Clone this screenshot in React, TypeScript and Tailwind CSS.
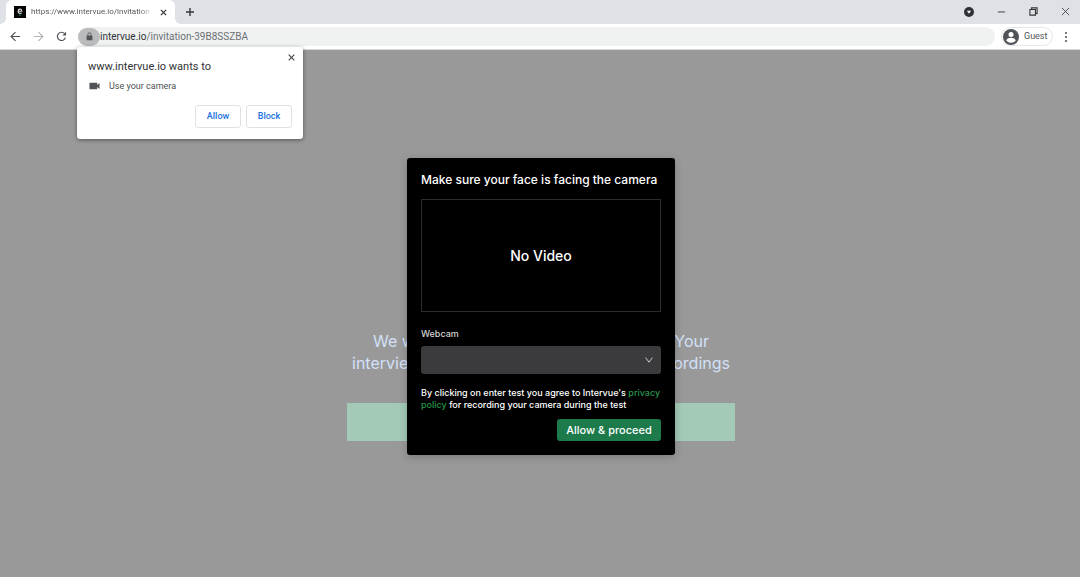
import React from "react";

function TabStrip() {
  return (
    <div className="flex h-6 items-stretch bg-[#dee1e6] pl-[6px]">
      <div className="relative flex w-[169px] items-center rounded-t-md bg-white px-2">
        <span className="absolute -left-[6px] bottom-0 size-[6px] bg-[radial-gradient(circle_at_0_0,#dee1e6_6px,white_6px)]" />
        <span className="absolute -right-[6px] bottom-0 size-[6px] bg-[radial-gradient(circle_at_100%_0,#dee1e6_6px,white_6px)]" />
        <svg viewBox="0 0 12 12" className="size-3 shrink-0" aria-hidden="true">
          <rect width="12" height="12" fill="#050505" />
          <path d="M4.200 5.300h3.600c0-1.500-.8-2.200-1.800-2.200s-1.800.8-1.800 2.200.9 2.100 2 2.100q.9 0 1.400-.5" fill="none" stroke="#dcdcdc" strokeWidth="1.100" />
          <path d="M4.800 9q1.200.6 2.400 0" fill="none" stroke="#1c8a50" strokeWidth="0.900" />
        </svg>
        <span className="ml-[5px] min-w-0 flex-1 overflow-hidden whitespace-nowrap text-[8px] leading-3 text-[#55585c] [mask-image:linear-gradient(to_right,black_88%,transparent)]">
          https://www.intervue.io/invitation
        </span>
        <button aria-label="Close tab" className="ml-[6px] shrink-0 text-[#303236]">
          <svg viewBox="0 0 8 8" className="size-[7px]" fill="none" stroke="currentColor" strokeWidth="1.400">
            <path d="M1 1l6 6M7 1L1 7" />
          </svg>
        </button>
      </div>
      <button aria-label="New tab" className="ml-[10px] text-[#35373a]">
        <svg viewBox="0 0 10 10" className="size-[10px]" fill="none" stroke="currentColor" strokeWidth="1.400">
          <path d="M5 1v8M1 5h8" />
        </svg>
      </button>
      <div className="ml-auto flex items-center gap-[23px] pb-[2px] pr-[10px] text-[#333]">
        <button aria-label="Search tabs" className="pt-[2px]">
          <svg viewBox="0 0 12 12" className="size-[10px]">
            <circle cx="6" cy="6" r="6" fill="#303134" />
            <path d="M3.500 4.500h5L6 8z" fill="#fff" />
          </svg>
        </button>
        <button aria-label="Minimize">
          <svg viewBox="0 0 10 10" className="size-[9px]" fill="none" stroke="currentColor">
            <path d="M1 5.500h8" />
          </svg>
        </button>
        <button aria-label="Restore">
          <svg viewBox="0 0 10 10" className="size-[9px]" fill="none" stroke="currentColor" strokeWidth="1.200">
            <path d="M1 2.800h6.200V9H1zM2.800 2.500V1H9v6.200H7.500" />
          </svg>
        </button>
        <button aria-label="Close window">
          <svg viewBox="0 0 10 10" className="size-[9px]" fill="none" stroke="currentColor" strokeWidth="0.900">
            <path d="M1 1l8 8M9 1L1 9" />
          </svg>
        </button>
      </div>
    </div>
  );
}

function Toolbar() {
  return (
    <div className="flex h-[26px] items-center border-b border-[#d8d8d8] bg-white pl-[10px] pr-3">
      <button aria-label="Back" className="text-[#4f5256]">
        <svg viewBox="0 0 12 12" className="size-[11px]" fill="none" stroke="currentColor" strokeWidth="1.300">
          <path d="M11 6H1.500M6 1.200L1.200 6 6 10.800" />
        </svg>
      </button>
      <button aria-label="Forward" className="ml-3 text-[#b4b6b9]">
        <svg viewBox="0 0 12 12" className="size-[11px]" fill="none" stroke="currentColor" strokeWidth="1.300">
          <path d="M1 6h9.500M6 1.200L10.800 6 6 10.800" />
        </svg>
      </button>
      <button aria-label="Reload" className="ml-3 text-[#4f5256]">
        <svg viewBox="0 0 12 12" className="size-[11px]" fill="none" stroke="currentColor" strokeWidth="1.300">
          <path d="M9.400 2.900A4.500 4.500 0 1 0 10.300 7.200" />
          <path d="M11 .8v4H7z" fill="currentColor" stroke="none" />
        </svg>
      </button>
      <div className="ml-[11px] flex h-[19px] flex-1 items-center rounded-full bg-[#f0f2f2]">
        <button aria-label="Site information" className="flex h-[18px] w-[22px] items-center justify-center rounded-full bg-[#b9bbbd]">
          <svg viewBox="0 0 8 10" className="h-[9px] w-[7px]">
            <rect x=".7" y="3.800" width="6.600" height="5.400" rx=".6" fill="#505357" />
            <path d="M2.200 4V2.500a1.800 1.800 0 0 1 3.600 0V4" fill="none" stroke="#505357" />
          </svg>
        </button>
        <span className="whitespace-nowrap text-[10px] leading-4 text-[#6c6f73]">
          <span className="text-[#2e3033]">intervue.io</span>/invitation-39B8SSZBA
        </span>
      </div>
      <button className="ml-[6px] flex h-[19px] w-[52px] items-center gap-[5px] rounded-full border border-[#e6e7e9] pl-px text-[9px] text-[#505357]">
        <svg viewBox="0 0 16 16" className="size-4 shrink-0">
          <circle cx="8" cy="8" r="8" fill="#505459" />
          <circle cx="8" cy="5.400" r="2.500" fill="#fff" />
          <path d="M3.200 11.400c1-2 2.800-2.600 4.800-2.600s3.800.6 4.800 2.600A5.800 5.800 0 0 1 8 13.800a5.800 5.800 0 0 1-4.800-2.400z" fill="#fff" />
        </svg>
        Guest
      </button>
      <button aria-label="Browser menu" className="ml-[11px]">
        <svg viewBox="0 0 4 12" className="h-3 w-1" fill="#55585c">
          <circle cx="2" cy="2" r="1.100" />
          <circle cx="2" cy="6" r="1.100" />
          <circle cx="2" cy="10" r="1.100" />
        </svg>
      </button>
    </div>
  );
}

function PermissionPrompt() {
  return (
    <section
      aria-label="Camera permission"
      className="absolute left-[77px] top-[47px] z-20 flex w-[226px] flex-col rounded-[3px] bg-white px-[11px] pb-[11px] pt-3 shadow-[0_1px_4px_rgba(0,0,0,0.45)]"
    >
      <button aria-label="Dismiss" className="absolute right-2 top-[7px] text-[#3c3f43]">
        <svg viewBox="0 0 8 8" className="size-[7px]" fill="none" stroke="currentColor" strokeWidth="1.200">
          <path d="M.8.800l6.400 6.400M7.200.8L.8 7.200" />
        </svg>
      </button>
      <h2 className="text-[11px] leading-4 text-[#303236]">www.intervue.io wants to</h2>
      <p className="mt-1 flex items-center text-[9px] leading-[14px] text-[#4c4f53]">
        <svg viewBox="0 0 12 8" className="ml-px mr-[9px] h-[8px] w-[11px]" fill="#505357">
          <path d="M1 .5h7.500q.5 0 .5.500v1.800L11.500.8v6.400L9 5.200V7q0 .5-.5.500H1q-.5 0-.5-.5V1Q.5.500 1 .5z" />
        </svg>
        Use your camera
      </p>
      <div className="mt-3 flex justify-end gap-[5px] text-[9px] font-medium text-[#1a6fe0]">
        <button className="h-[23px] w-[46px] rounded-[3px] border border-[#dfe1e5]">Allow</button>
        <button className="h-[23px] w-[46px] rounded-[3px] border border-[#dfe1e5]">Block</button>
      </div>
    </section>
  );
}

function CameraDialog() {
  return (
    <div
      role="dialog"
      aria-labelledby="camera-title"
      className="relative z-10 flex w-[268px] flex-col rounded-[3px] bg-black p-[14px] text-white shadow-[0_2px_8px_rgba(0,0,0,0.2)]"
    >
      <h1 id="camera-title" className="whitespace-nowrap text-[12px] font-medium leading-4">
        Make sure your face is facing the camera
      </h1>
      <div className="mt-[11px] flex h-[113px] items-center justify-center border border-[#2c2c2c] text-[14px] font-medium">
        No Video
      </div>
      <label htmlFor="webcam" className="mt-4 text-[9px] font-medium leading-3 text-[#d5d5d5]">
        Webcam
      </label>
      <div className="relative mt-[6px]">
        <select id="webcam" className="block h-7 w-full appearance-none rounded-[3px] bg-[#3b3b3d] px-2 text-[9px]">
          <option></option>
        </select>
        <svg viewBox="0 0 8 8" className="pointer-events-none absolute right-2 top-[10px] size-2" fill="none" stroke="#c9c9c9">
          <path d="M.6 1.600L4 6.200l3.400-4.600" />
        </svg>
      </div>
      <p className="mt-[13px] whitespace-nowrap text-[9px] font-medium leading-3">
        By clicking on enter test you agree to Intervue's{" "}
        <a href="#privacy" className="text-[#27944a]">
          privacy
          <br />
          policy
        </a>{" "}
        for recording your camera during the test
      </p>
      <button className="mt-2 h-[22px] w-[104px] self-end whitespace-nowrap rounded-[3px] bg-[#1c7a4b] text-[11px] font-medium">
        Allow &amp; proceed
      </button>
    </div>
  );
}

export default function App() {
  return (
    <div className="relative flex min-h-screen flex-col bg-[#999] font-['Roboto',sans-serif]">
      <TabStrip />
      <Toolbar />
      <PermissionPrompt />
      <main className="relative flex flex-1 flex-col items-center pl-[2px] pt-[280px] font-['Inter',sans-serif]">
        <div className="flex w-[388px] flex-col items-center whitespace-nowrap text-[16px] leading-[22px] text-[#d3e1f8]">
          <p className="flex w-[336px] justify-between">
            <span>We will</span>
            <span>Your</span>
          </p>
          <p className="flex w-[378px] justify-between">
            <span>interview</span>
            <span>recordings</span>
          </p>
          <button aria-label="Continue" className="mt-[29px] h-[38px] w-full bg-[#a3cab7]" />
        </div>
        <div className="absolute inset-0 flex items-start justify-center pl-[2px] pt-[108px]">
          <CameraDialog />
        </div>
      </main>
    </div>
  );
}
